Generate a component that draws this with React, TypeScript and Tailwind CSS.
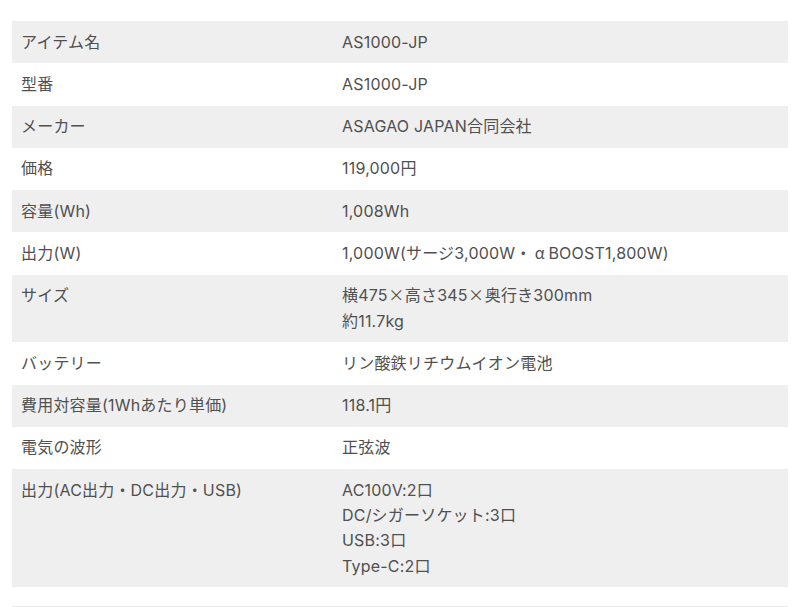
const rows: { label: string; value: string[] }[] = [
  { label: "アイテム名", value: ["AS1000-JP"] },
  { label: "型番", value: ["AS1000-JP"] },
  { label: "メーカー", value: ["ASAGAO JAPAN合同会社"] },
  { label: "価格", value: ["119,000円"] },
  { label: "容量(Wh)", value: ["1,008Wh"] },
  { label: "出力(W)", value: ["1,000W(サージ3,000W・αBOOST1,800W)"] },
  { label: "サイズ", value: ["横475×高さ345×奥行き300mm", "約11.7kg"] },
  { label: "バッテリー", value: ["リン酸鉄リチウムイオン電池"] },
  { label: "費用対容量(1Whあたり単価)", value: ["118.1円"] },
  { label: "電気の波形", value: ["正弦波"] },
  {
    label: "出力(AC出力・DC出力・USB)",
    value: ["AC100V:2口", "DC/シガーソケット:3口", "USB:3口", "Type-C:2口"],
  },
];

// × and α are drawn full width in the original, so hand them to the CJK font
function Text({ s }: { s: string }) {
  const parts = s.split(/([×α])/);
  return (
    <>
      {parts.map((p, i) =>
        p === "×" || p === "α" ? (
          <span
            key={i}
            style={{ fontFamily: '"Noto Sans CJK JP", sans-serif' }}
            className="inline-block w-[17px] text-center leading-none"
          >
            {p}
          </span>
        ) : (
          <span key={i}>{p}</span>
        ),
      )}
    </>
  );
}

export default function App() {
  return (
    <div
      className="bg-white min-h-[607px] pt-[21px] px-[12px] text-[16px] text-[#505050]"
      style={{ fontFamily: 'Inter, "Noto Sans CJK JP", sans-serif' }}
    >
      <table className="w-[776px] border-collapse">
        <tbody>
          {rows.map((row, i) => (
            <tr key={row.label} className={i % 2 === 0 ? "bg-[#efefef]" : "bg-white"}>
              <td className="w-[321px] align-top px-[9px] py-[8.5px] leading-[25.3px] tracking-[0.2px]">
                {row.label}
              </td>
              <td className="align-top px-[9px] py-[8.5px] leading-[25.3px] tracking-[0.2px]">
                {row.value.map((v) => (
                  <div key={v} className="h-[25.3px]">
                    <Text s={v} />
                  </div>
                ))}
              </td>
            </tr>
          ))}
        </tbody>
      </table>
      <div className="mt-[19px] border-t border-[#e8e8e8]" />
    </div>
  );
}
